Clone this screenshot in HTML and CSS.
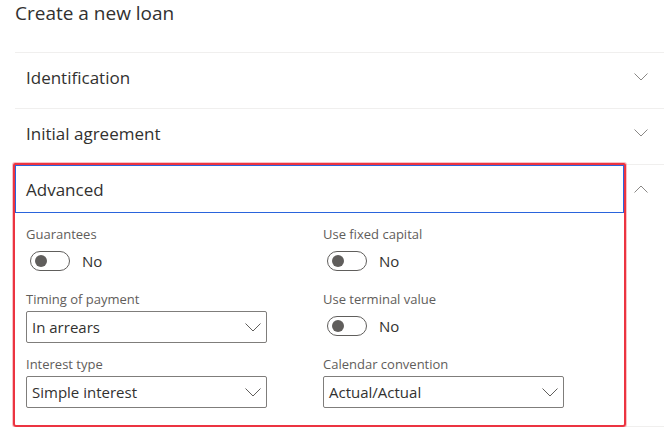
FILE: index.html
```html
<!DOCTYPE html>
<html lang="en">
<head>
<meta charset="utf-8">
<title>Create a new loan</title>
<link rel="stylesheet" href="styles.css">
</head>
<body>
<div class="page">
  <h1 class="title">Create a new loan</h1>
  <div class="tabs">
    <section class="tab">
      <div class="tab-header">
        <div class="tab-btn">Identification</div>
        <div class="tab-chev">
          <svg width="14" height="8" viewBox="0 0 14 8"><path d="M0.5 0.5 L7 7 L13.5 0.5" fill="none" stroke="#8a8886" stroke-width="1"/></svg>
        </div>
      </div>
    </section>
    <section class="tab">
      <div class="tab-header">
        <div class="tab-btn">Initial agreement</div>
        <div class="tab-chev">
          <svg width="14" height="8" viewBox="0 0 14 8"><path d="M0.5 0.5 L7 7 L13.5 0.5" fill="none" stroke="#8a8886" stroke-width="1"/></svg>
        </div>
      </div>
    </section>
    <section class="tab open">
      <div class="tab-header">
        <div class="tab-btn focused">Advanced</div>
        <div class="tab-chev">
          <svg width="14" height="8" viewBox="0 0 14 8"><path d="M0.5 7.5 L7 1 L13.5 7.5" fill="none" stroke="#8a8886" stroke-width="1"/></svg>
        </div>
      </div>
      <div class="tab-body">
        <div class="field">
          <div class="label">Guarantees</div>
          <div class="toggle-row"><span class="toggle"><span class="knob"></span></span><span class="toggle-text">No</span></div>
        </div>
        <div class="field">
          <div class="label">Use fixed capital</div>
          <div class="toggle-row"><span class="toggle"><span class="knob"></span></span><span class="toggle-text">No</span></div>
        </div>
        <div class="field">
          <div class="label">Timing of payment</div>
          <div class="select"><span>In arrears</span>
            <svg width="16" height="9" viewBox="0 0 16 9"><path d="M0.5 0.5 L8 8 L15.5 0.5" fill="none" stroke="#605e5c" stroke-width="1"/></svg>
          </div>
        </div>
        <div class="field">
          <div class="label">Use terminal value</div>
          <div class="toggle-row"><span class="toggle"><span class="knob"></span></span><span class="toggle-text">No</span></div>
        </div>
        <div class="field">
          <div class="label">Interest type</div>
          <div class="select"><span>Simple interest</span>
            <svg width="16" height="9" viewBox="0 0 16 9"><path d="M0.5 0.5 L8 8 L15.5 0.5" fill="none" stroke="#605e5c" stroke-width="1"/></svg>
          </div>
        </div>
        <div class="field">
          <div class="label">Calendar convention</div>
          <div class="select"><span>Actual/Actual</span>
            <svg width="16" height="9" viewBox="0 0 16 9"><path d="M0.5 0.5 L8 8 L15.5 0.5" fill="none" stroke="#605e5c" stroke-width="1"/></svg>
          </div>
        </div>
      </div>
      <div class="annotation"></div>
    </section>
  </div>
</div>
</body>
</html>
```

FILE: styles.css
```css
* { box-sizing: border-box; }

html, body {
  margin: 0;
  padding: 0;
  background: #ffffff;
}

body {
  font-family: "Open Sans", "Noto Sans", sans-serif;
  color: #323130;
}

.page {
  padding-left: 15px;
}

.title {
  margin: 0;
  height: 52px;
  font-size: 19px;
  font-weight: 400;
  line-height: 26px;
  color: #323130;
}

.tab {
  position: relative;
  border-top: 1px solid #f0efee;
  padding-bottom: 7px;
}

.tab.open {
  border-bottom: 1px solid #f0efee;
  padding-bottom: 0;
}

.tab-header {
  display: flex;
  height: 48px;
}

.tab-btn {
  flex: 1;
  display: flex;
  align-items: center;
  padding-left: 10px;
  font-size: 17px;
  font-weight: 500;
  color: #323130;
  border: 1px solid transparent;
}

.tab-btn.focused {
  border-color: #2a64dc;
}

.tab-chev {
  width: 40px;
  display: flex;
  align-items: center;
  padding-left: 10px;
}

.tab-body {
  display: grid;
  grid-template-columns: 241px 241px;
  column-gap: 56px;
  row-gap: 11px;
  padding: 11px 0 18px 11px;
}

.label {
  font-size: 13px;
  line-height: 20px;
  color: #5f5d5b;
  margin-bottom: 2px;
}

.toggle-row {
  height: 32px;
  display: flex;
  align-items: center;
  padding-bottom: 3px;
  padding-left: 4px;
}

.toggle {
  width: 40px;
  height: 20px;
  border: 1px solid #605e5c;
  border-radius: 10px;
  display: flex;
  align-items: center;
  padding-left: 4px;
}

.knob {
  width: 12px;
  height: 12px;
  border-radius: 50%;
  background: #605e5c;
}

.toggle-text {
  margin-left: 12px;
  font-size: 15px;
  color: #323130;
}

.select {
  height: 32px;
  border: 1px solid #7f7d7b;
  border-radius: 2px;
  display: flex;
  align-items: center;
  justify-content: space-between;
  padding: 0 5px 0 5px;
  font-size: 15px;
  color: #323130;
}

.annotation {
  position: absolute;
  left: -2px;
  top: -2px;
  width: 613px;
  height: 264px;
  border: 2px solid #ec3441;
  border-radius: 2px 2px 3px 3px;
  box-shadow: 0 0 0 1px rgba(236, 52, 65, 0.3);
  pointer-events: none;
}
```
